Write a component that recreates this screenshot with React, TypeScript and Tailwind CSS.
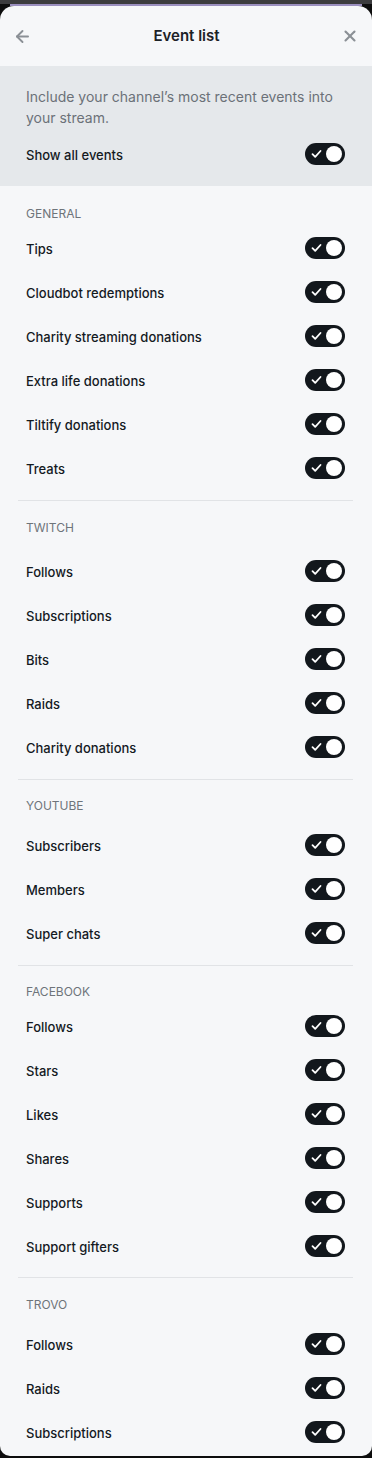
import React from "react";

const sections: { title: string; pt: string; gap: string; pb: string; items: string[] }[] = [
  { title: "General", pt: "pt-[20px]", gap: "mt-[4px]", pb: "pb-[10px]", items: ["Tips", "Cloudbot redemptions", "Charity streaming donations", "Extra life donations", "Tiltify donations", "Treats"] },
  { title: "Twitch", pt: "pt-[19px]", gap: "mt-[13px]", pb: "pb-[10px]", items: ["Follows", "Subscriptions", "Bits", "Raids", "Charity donations"] },
  { title: "YouTube", pt: "pt-[18px]", gap: "mt-[9px]", pb: "pb-[10px]", items: ["Subscribers", "Members", "Super chats"] },
  { title: "Facebook", pt: "pt-[18px]", gap: "mt-[4px]", pb: "pb-[9px]", items: ["Follows", "Stars", "Likes", "Shares", "Supports", "Support gifters"] },
  { title: "Trovo", pt: "pt-[19px]", gap: "mt-[9px]", pb: "pb-[10px]", items: ["Follows", "Raids", "Subscriptions"] },
];

function Toggle() {
  return (
    <div className="relative w-10 h-[22px] rounded-full bg-[#12171c] flex items-center shrink-0">
      <svg className="absolute left-[6px] top-[6px]" width="11" height="10" viewBox="0 0 11 10" fill="none">
        <path d="M1.5 5.2 L4.2 7.8 L9.5 2" stroke="white" strokeWidth="1.8" strokeLinecap="round" strokeLinejoin="round" />
      </svg>
      <div className="absolute right-[3px] top-[3px] w-4 h-4 rounded-full bg-white" />
    </div>
  );
}

function Row({ label }: { label: string }) {
  return (
    <div className="h-11 flex items-center justify-between pl-[26px] pr-[27px]">
      <span className="mt-[3px] text-[13px] font-medium text-[#141a1f]">{label}</span>
      <Toggle />
    </div>
  );
}

export default function App() {
  return (
    <div className="w-[372px] h-[1458px] bg-[#0d0d0d] relative overflow-hidden" style={{ fontFamily: "Inter, 'Noto Sans', sans-serif" }}>
      <div className="absolute top-0 left-0 right-0 h-[4px] bg-[#3c3c3e]" />
      <div className="absolute top-[4px] left-[10px] right-[10px] h-[2px] bg-[#9b8fbf]" />
      <div className="absolute top-[6px] left-0 right-0 bottom-[2px] bg-[#f6f7f9] rounded-t-[14px] rounded-b-[10px] overflow-hidden">
        <div className="h-[60px] flex items-center justify-between px-[13px]">
          <svg width="19" height="19" viewBox="0 0 24 24" fill="none" stroke="#8b9096" strokeWidth="2.4" strokeLinecap="round" strokeLinejoin="round">
            <path d="M19 12H5" />
            <path d="M12 19l-7-7 7-7" />
          </svg>
          <span className="text-[15px] font-semibold text-[#1c2126]">Event list</span>
          <svg width="18" height="18" viewBox="0 0 24 24" fill="none" stroke="#8b9096" strokeWidth="2.8" strokeLinecap="round">
            <path d="M6 6l12 12" />
            <path d="M18 6L6 18" />
          </svg>
        </div>
        <div className="bg-[#e5e8eb] h-[120px] pt-5">
          <p className="px-[26px] text-[14px] leading-[21px] text-[#6b7178]">
            Include your channel’s most recent events into your stream.
          </p>
          <div className="mt-[4px]">
            <Row label="Show all events" />
          </div>
        </div>
        {sections.map((s, i) => (
          <div key={s.title}>
            {i > 0 && <div className="ml-[18px] mr-[19px] h-px bg-[#e1e3e6]" />}
            <div className={`${s.pt} ${s.pb}`}>
              <div className="px-[26px] text-[12px] leading-4 uppercase text-[#6e747a]">{s.title}</div>
              <div className={s.gap}>
                {s.items.map((it) => (
                  <Row key={it} label={it} />
                ))}
              </div>
            </div>
          </div>
        ))}
      </div>
    </div>
  );
}
